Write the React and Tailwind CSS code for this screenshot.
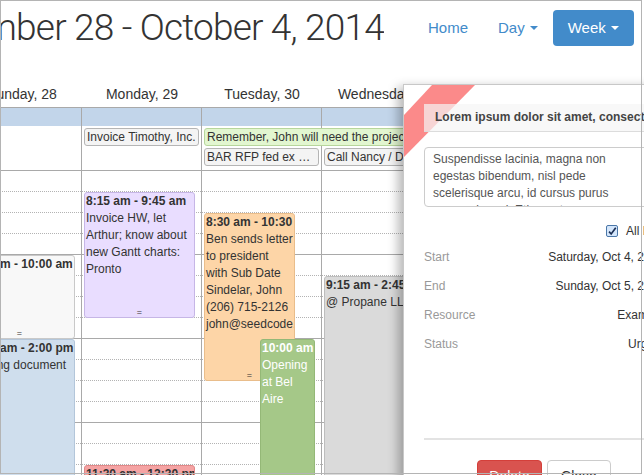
import React from 'react';

const days = ['Sunday, 28', 'Monday, 29', 'Tuesday, 30', 'Wednesday, 1', 'Thursday, 2', 'Friday, 3', 'Saturday, 4'];

// timed events, minutes from 8:00 am; 84px per hour
const events = [
    { day: 0, start: 60, end: 120, left: 2, width: 111, title: '9:00 am - 10:00 am', lines: ['dsf'], cls: 'bg-[#f8f8f8] border-[#c9c9c9] text-[#333]', handle: true },
    { day: 0, start: 120, end: 360, left: 2, width: 111, title: '10:00 am - 2:00 pm', lines: ['Sending document'], cls: 'bg-[#cfdeed] border-[#b3c6da] text-[#333]' },
    { day: 1, start: 15, end: 105, left: 2, width: 111, title: '8:15 am - 9:45 am', lines: ['Invoice HW, let', 'Arthur; know about', 'new Gantt charts:', 'Pronto'], cls: 'bg-[#e9ddff] border-[#c6b6e6] text-[#333]', handle: true },
    { day: 1, start: 210, end: 270, left: 2, width: 111, title: '11:30 am - 12:30 pm', lines: [], cls: 'bg-[#f5a3a3] border-[#e08888] text-[#333]' },
    { day: 2, start: 30, end: 150, left: 2, width: 91, title: '8:30 am - 10:30 am', lines: ['Ben sends letter', 'to president', 'with Sub Date', 'Sindelar, John', '(206) 715-2126', 'john@seedcode.com'], cls: 'bg-[#fdd5a7] border-[#e9bd8b] text-[#333]', handle: true },
    { day: 2, start: 120, end: 360, left: 58, width: 55, title: '10:00 am', lines: ['Opening', 'at Bel', 'Aire'], cls: 'bg-[#a5c888] border-[#94b877] text-white' },
    { day: 3, start: 75, end: 405, left: 2, width: 111, title: '9:15 am - 2:45 pm', lines: ['@ Propane LLC'], cls: 'bg-[#dadada] border-[#bdbdbd] text-[#333]' },
];

const Caret = () => (
    <span className="inline-block w-0 h-0 ml-[5px] border-t-[4px] border-x-[4px] border-t-current border-x-transparent align-middle" />
);

const Chip = ({ children, className = '' }) => (
    <div className={`h-[18px] rounded-[3px] border pl-[2px] text-[12px] leading-[16px] whitespace-nowrap overflow-hidden ${className}`}>
        {children}
    </div>
);

const Event = ({ ev }) => (
    <div
        className={`absolute rounded-[3px] border px-[1px] overflow-hidden text-[12px] leading-[17px] ${ev.cls}`}
        style={{ top: ev.start * 1.4, height: (ev.end - ev.start) * 1.4, left: ev.left, width: ev.width }}
    >
        <div className="font-bold whitespace-nowrap">{ev.title}</div>
        {ev.lines.map((l) => (
            <div key={l} className="whitespace-nowrap">{l}</div>
        ))}
        {ev.handle && (
            <div className="absolute bottom-[0px] left-0 right-0 text-center text-[9px] leading-[10px]">=</div>
        )}
    </div>
);

const Calendar = () => (
    <div className="flex flex-col ml-[-38px] text-[#333]">
        <div className="flex h-[25px]">
            {days.map((d) => (
                <div key={d} className="w-[120px] shrink-0 text-center text-[14px] leading-[25px] whitespace-nowrap">{d}</div>
            ))}
        </div>
        <div className="flex h-[19px] border-t border-[#a9a9a9] bg-[#c2d5ea]">
            {days.map((d) => (
                <div key={d} className="w-[120px] shrink-0 border-r border-[#a9a9a9]" />
            ))}
        </div>
        <div className="flex h-[45px] border-b border-[#a9a9a9]">
            {days.map((d, i) => (
                <div key={d} className="relative w-[120px] shrink-0 border-r border-[#a9a9a9] pt-[2px] px-[2px] flex flex-col gap-[2px]">
                    {i === 1 && <Chip className="w-[115px] bg-[#f4f4f4] border-[#b5b5b5]">Invoice Timothy, Inc.</Chip>}
                    {i === 2 && (
                        <>
                            <Chip className="relative z-10 w-[234px] bg-[#e2f6d0] border-[#b7d69c]">Remember, John will need the project files</Chip>
                            <Chip className="w-[115px] bg-[#f4f4f4] border-[#b5b5b5] text-ellipsis pr-[2px]">BAR RFP fed ex delivery</Chip>
                        </>
                    )}
                    {i === 3 && (
                        <>
                            <div className="h-[18px]" />
                            <Chip className="w-[115px] bg-[#f4f4f4] border-[#b5b5b5]">Call Nancy / Dan</Chip>
                        </>
                    )}
                </div>
            ))}
        </div>
        <div className="flex">
            {days.map((d, i) => (
                <div key={d} className="relative w-[120px] shrink-0 border-r border-[#a9a9a9]">
                    {Array.from({ length: 15 }).map((_, s) => (
                        <div
                            key={s}
                            className={s % 4 === 3 ? 'h-[21px] border-b border-[#a9a9a9]' : 'h-[21px] border-b border-dotted border-[#b3b3b3]'}
                        />
                    ))}
                    {events.filter((e) => e.day === i).map((ev) => (
                        <Event key={ev.title} ev={ev} />
                    ))}
                </div>
            ))}
        </div>
    </div>
);

const Row = ({ label, value }) => (
    <div className="flex items-center justify-between h-[29px] text-[12px]">
        <span className="text-[#999]">{label}</span>
        <span className="text-[#333]">{value}</span>
    </div>
);

const Popover = () => (
    <div className="absolute left-[403px] top-[84px] w-[282px] h-[420px] bg-white border border-[#c8c8c8] shadow-[-5px_3px_10px_rgba(0,0,0,0.28)] overflow-hidden z-20">
        <svg className="absolute left-0 top-0" width="74" height="74" viewBox="0 0 74 74">
            <polygon points="28,0 71,0 0,72 0,30" fill="#fb8a8a" />
        </svg>
        <div className="relative flex flex-col px-[20px] pt-[19px] text-[12px]">
            <div className="h-[28px] bg-[#f5f5f5]/70 border-b border-[#dcdcdc] pl-[11px] leading-[27px] font-bold text-[#444] whitespace-nowrap overflow-hidden">
                Lorem ipsum dolor sit amet, consectetur adipiscing
            </div>
            <div className="mt-[15px] h-[60px] rounded-[4px] border border-[#cccccc] px-[8px] pt-[3px] leading-[17px] text-[#555] overflow-hidden">
                Suspendisse lacinia, magna non<br />
                egestas bibendum, nisl pede<br />
                scelerisque arcu, id cursus purus<br />
                commodo sed. Etiam rutrum
            </div>
            <div className="mt-[16px] h-[16px] flex items-center justify-end gap-[8px] text-[#333]">
                <span className="w-[12px] h-[12px] rounded-[2px] border border-[#4b77a8] bg-[#d4e6fb] flex items-center justify-center">
                    <svg width="11" height="11" viewBox="0 0 12 12">
                        <path d="M2.5 6.2 L5 9 L10.5 1.5" fill="none" stroke="#1b2f55" strokeWidth="2" />
                    </svg>
                </span>
                <span>All Day</span>
            </div>
            <div className="mt-[3px] flex flex-col">
                <Row label="Start" value="Saturday, Oct 4, 2014" />
                <Row label="End" value="Sunday, Oct 5, 2014" />
                <Row label="Resource" value="Example" />
                <Row label="Status" value="Urgent" />
            </div>
            <div className="mt-[80px] h-[2px] bg-[#e3e3e3]" />
            <div className="mt-[20px] flex justify-center gap-[5px] text-[14px]">
                <button className="w-[65px] h-[32px] rounded-[4px] bg-[#d9534f] border border-[#d43f3a] text-white">Delete</button>
                <button className="w-[64px] h-[32px] rounded-[4px] bg-white border border-[#cccccc] text-[#333]">Close</button>
            </div>
        </div>
    </div>
);

export default function App() {
    return (
        <div className="relative w-[644px] h-[475px] overflow-hidden bg-white font-['Liberation_Sans',Arial,sans-serif] text-[#333]">
            <div className="flex items-start h-[82px]">
                <div className="w-[384px] shrink-0 overflow-hidden flex justify-end pt-[9px]">
                    <h1 className="whitespace-nowrap font-['Roboto',sans-serif] font-light text-[37px] tracking-[-0.8px] leading-[38px] text-[#333]">
                        September 28 - October 4, 2014
                    </h1>
                </div>
                <nav className="flex mt-[10px] ml-[29px] text-[15px]">
                    <a className="h-[36px] px-[15px] flex items-center rounded-[4px] text-[#428bca]">Home</a>
                    <a className="h-[36px] px-[15px] flex items-center rounded-[4px] text-[#428bca]">Day<Caret /></a>
                    <a className="h-[36px] px-[15px] flex items-center rounded-[4px] bg-[#428bca] text-white">Week<Caret /></a>
                </nav>
            </div>
            <Calendar />
            <Popover />
            <div className="absolute left-0 top-0 w-[642px] h-[474px] border border-[#b4b4b4] pointer-events-none z-30" />
        </div>
    );
}
